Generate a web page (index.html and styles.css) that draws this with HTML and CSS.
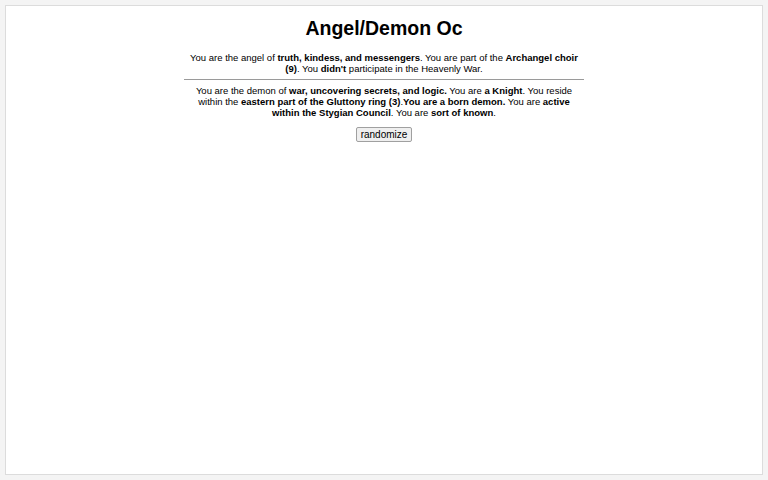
FILE: index.html
```html
<!DOCTYPE html>
<html lang="en">
  <head>
    <meta charset="UTF-8" />
    <meta name="viewport" content="width=device-width, initial-scale=1.0" />
    <title>Angel/Demon Oc</title>
    <link rel="stylesheet" href="styles.css">
  </head>
  <body>
    <div class="page">
      <h1>Angel/Demon Oc</h1>
      <div class="content">
        <p id="angel">
          You are the angel of <b>truth, kindess, and messengers</b>. You are part of the <b>Archangel choir (9)</b>. You <b>didn't</b> participate in the Heavenly War.
        </p>
        <hr />
        <p id="demon">
          You are the demon of <b>war, uncovering secrets, and logic.</b> You are <b>a Knight</b>. You reside within the <b>eastern part of the Gluttony ring (3)</b>.<b>You are a born demon.</b> You are <b>active within the Stygian Council</b>. You are <b>sort of known</b>.
        </p>
        <button class="randomize" onclick="randomize()">randomize</button>
      </div>
    </div>

    <script>
      function pick(list) {
        return list[Math.floor(Math.random() * list.length)];
      }

      function randomize() {
        const angel = document.getElementById("angel");
        const demon = document.getElementById("demon");
        angel.dataset.seed = pick(["1", "2", "3"]);
        demon.dataset.seed = pick(["1", "2", "3"]);
      }
    </script>
  </body>
</html>
```

FILE: styles.css
```css
html {
  background: #f4f4f4;
}
body {
  font-family: "Liberation Sans", Arial, sans-serif;
  margin: 5px;
  color: #000;
}
.page {
  background: #fff;
  border: 1px solid #dcdcdc;
  height: 468px;
  text-align: center;
}
.page h1 {
  font-size: 19.5px;
  margin: 11px 0 0;
}
.content {
  max-width: 400px;
  margin: 0 auto;
  font-size: 9.5px;
}
.content p {
  margin: 12px 4px 0;
  line-height: normal;
}
.content hr {
  margin: 5px 0 0;
  border: none;
  border-top: 1px solid #9a9a9a;
}
.content p + hr + p {
  margin-top: 5px;
}
.randomize {
  font-family: "Liberation Sans", Arial, sans-serif;
  font-size: 10px;
  margin-top: 9px;
  padding: 1px 4px;
  background: #efefef;
  border: 1px solid #a0a0a0;
  border-radius: 2px;
}
```
